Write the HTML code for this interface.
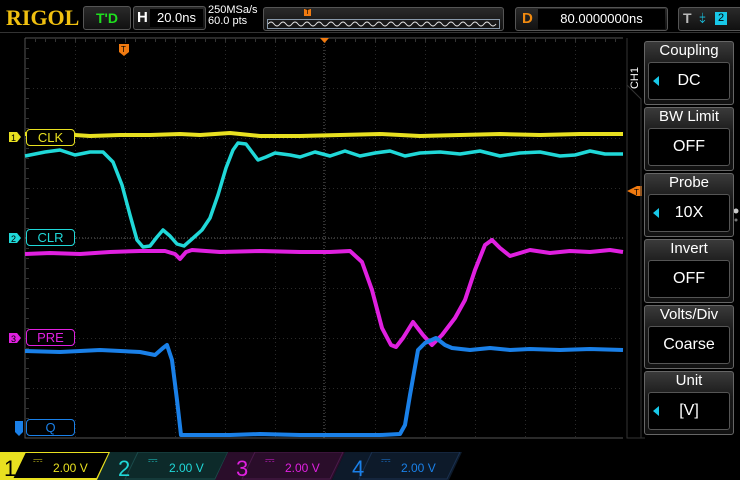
<!DOCTYPE html>
<html><head><style>
body{margin:0;background:#000;width:740px;height:480px;overflow:hidden;position:relative;font-family:"Liberation Sans",sans-serif;color:#fff}
.a{position:absolute}
.box{position:absolute;border:1px solid #555;border-radius:3px;background:linear-gradient(#2a2a2a,#111)}
.btn{position:absolute;left:644px;width:88px;height:62px;border:1px solid #666;border-radius:3px;background:linear-gradient(#3a3a3a,#1a1a1a 40%,#111)}
.btn .t{position:absolute;top:0;left:0;width:88px;text-align:center;font-size:15px;color:#fff}
.btn .v{position:absolute;left:3px;top:20px;width:80px;height:36px;border:1px solid #555;border-radius:3px;background:#000;text-align:center;line-height:36px;font-size:16px}
.arr{position:absolute;left:4px;top:13px;width:0;height:0;border-top:5px solid transparent;border-bottom:5px solid transparent;border-right:6px solid #18c8e8}
.lbl{position:absolute;left:26px;width:47px;height:15px;border:1.5px solid;border-radius:4px;text-align:center;font-size:13px;line-height:15px;background:#000}
</style></head><body>
<div class="a" style="left:6px;top:5px;font-family:'Liberation Serif',serif;font-weight:bold;font-size:22px;color:#f0c010">RIGOL</div>
<div class="box" style="left:83px;top:6px;width:46px;height:22px;text-align:center;line-height:22px;color:#1ee01e;font-weight:bold;font-size:14px">T'D</div>
<div class="box" style="left:133px;top:6px;width:71px;height:22px"><span class="a" style="left:3px;top:2px;font-weight:bold;font-size:15px">H</span><div class="a" style="left:16px;top:2px;width:53px;height:18px;background:#000;font-size:13px;line-height:18px;text-align:center">20.0ns</div></div>
<div class="a" style="left:208px;top:5px;font-size:11px;line-height:11px">250MSa/s<br>60.0 pts</div>
<div class="box" style="left:263px;top:7px;width:239px;height:22px"><div class="a" style="left:3px;top:11px;width:231px;height:8px;border:1px solid #89a"><svg width="231" height="8" class="a" style="left:0;top:0"><path d="M0 4 Q3 0 6 4 T12 4 T18 4 T24 4 T30 4 T36 4 T42 4 T48 4 T54 4 T60 4 T66 4 T72 4 T78 4 T84 4 T90 4 T96 4 T102 4 T108 4 T114 4 T120 4 T126 4 T132 4 T138 4 T144 4 T150 4 T156 4 T162 4 T168 4 T174 4 T180 4 T186 4 T192 4 T198 4 T204 4 T210 4 T216 4 T222 4 T228 4" stroke="#ddd" fill="none"/></svg></div><div class="a" style="left:40px;top:1px;width:7px;height:7px;background:#f07a10;font-size:7px;line-height:7px;text-align:center;color:#000">T</div></div>
<div class="box" style="left:515px;top:7px;width:151px;height:22px"><span class="a" style="left:6px;top:2px;color:#f08a10;font-weight:bold;font-size:15px">D</span><div class="a" style="left:22px;top:1px;width:127px;height:20px;background:#000;font-size:13px;line-height:20px;text-align:center">80.0000000ns</div></div>
<div class="box" style="left:678px;top:7px;width:70px;height:22px"><span class="a" style="left:4px;top:2px;color:#bbb;font-weight:bold;font-size:14px">T</span><span class="a" style="left:20px;top:1px;color:#18c8e8;font-size:14px">⤈</span><span class="a" style="left:36px;top:4px;width:12px;height:13px;background:#18c8e8;color:#000;font-size:11px;line-height:13px;text-align:center">2</span></div>
<div class="a" style="left:0;top:32px;width:740px;height:1px;background:#333"></div>

<svg class="a" style="left:0;top:0" width="740" height="480">
<defs><pattern id="g" x="25" y="38" width="50" height="50" patternUnits="userSpaceOnUse"><path d="M0 0V50M0 0H50" stroke="#555" stroke-dasharray="1 3" fill="none"/></pattern>
<pattern id="tx" x="25" y="38" width="10" height="10" patternUnits="userSpaceOnUse"><path d="M0 0V4" stroke="#666"/></pattern>
<pattern id="ty" x="25" y="38" width="10" height="10" patternUnits="userSpaceOnUse"><path d="M0 0H4" stroke="#666"/></pattern></defs>
<rect x="25" y="38" width="598" height="400" fill="url(#g)"/>
<rect x="25" y="39" width="598" height="4" fill="url(#tx)"/>
<rect x="25" y="433" width="598" height="4" fill="url(#tx)" transform="translate(0,0)"/>
<rect x="26" y="38" width="4" height="400" fill="url(#ty)"/>
<path d="M25 38V438H623" stroke="#555" fill="none"/>
<path d="M25 38H623" stroke="#555" fill="none"/>
<path d="M324 38V438M25 238H623" stroke="#666" stroke-dasharray="1 2" fill="none"/>
<polygon points="119,44 129,44 129,52 124,56 119,52" fill="#f07a10"/><text x="121" y="52" font-size="8" fill="#000">T</text>
<polygon points="320,38 329,38 324.5,43" fill="#f07a10"/>
<g stroke-linejoin="round">
<polyline fill="none" stroke="#e8e020" stroke-width="4" points="25,134 60,134 90,136 120,135 150,135 180,134 200,135 230,133 260,136 300,136 340,135 380,134 420,136 460,135 500,134 540,135 580,134 623,134"/>
<polyline fill="none" stroke="#20d8d8" stroke-width="3.5" points="25,156 45,152 60,150 75,155 90,152 103,152 113,162 122,185 130,215 137,240 143,247 150,246 157,237 163,230 170,236 177,244 184,246 192,239 202,230 210,218 218,195 226,168 233,150 238,143 246,144 252,152 258,160 266,157 275,153 290,155 300,157 315,152 330,156 345,151 360,156 375,153 390,151 405,156 420,153 440,152 460,154 480,151 500,156 520,153 540,152 560,156 575,155 590,151 605,154 623,154"/>
<polyline fill="none" stroke="#e020e0" stroke-width="4" points="25,254 50,253 80,254 110,252 140,251 165,251 175,254 180,259 186,252 192,250 220,252 260,251 300,252 330,252 350,251 362,262 372,290 382,328 391,345 396,347 403,338 413,322 423,335 432,345 442,335 455,318 465,300 475,270 485,245 492,240 500,248 510,256 520,253 530,250 550,253 570,251 590,252 610,250 623,252"/>
<polyline fill="none" stroke="#1a80e8" stroke-width="4" points="25,351 60,352 100,350 140,352 155,355 163,348 167,345 172,360 177,400 181,435 230,435 260,434 300,435 340,435 380,435 400,434 405,425 410,395 418,350 425,343 436,338 445,345 452,348 470,350 490,348 510,350 530,349 560,350 590,349 623,350"/>
</g>
<polygon points="9,132 17,132 21,137 17,142 9,142" fill="#e8e020"/><text x="11" y="141" font-size="9" fill="#000">1</text>
<polygon points="9,233 17,233 21,238 17,243 9,243" fill="#20d8d8"/><text x="11" y="242" font-size="9" fill="#000">2</text>
<polygon points="9,333 17,333 21,338 17,343 9,343" fill="#e020e0"/><text x="11" y="342" font-size="9" fill="#000">3</text>
<polygon points="15,421 23,421 23,432 19,436 15,432" fill="#1a80e8"/>
<polygon points="627,191 637,186 642,186 642,196 637,196" fill="#f07a10"/><text x="634" y="195" font-size="8" fill="#000">T</text>
<path d="M627 38V438H645M627 85L641 99V438" stroke="#333" fill="none"/>
<circle cx="736" cy="211" r="2.5" fill="#ccc"/><circle cx="736" cy="220" r="1.5" fill="#777"/>
</svg>
<div class="lbl" style="top:129px;border-color:#e8e020;color:#e8e020">CLK</div>
<div class="lbl" style="top:229px;border-color:#20d8d8;color:#20d8d8">CLR</div>
<div class="lbl" style="top:329px;border-color:#e020e0;color:#e020e0">PRE</div>
<div class="lbl" style="top:419px;border-color:#1a80e8;color:#1a80e8">Q</div>
<div class="a" style="left:624px;top:72px;transform:rotate(-90deg);font-size:11px">CH1</div>

<div class="btn" style="top:41px"><div class="t">Coupling</div><div class="v"><div class="arr"></div>DC</div></div>
<div class="btn" style="top:107px"><div class="t">BW Limit</div><div class="v">OFF</div></div>
<div class="btn" style="top:173px"><div class="t">Probe</div><div class="v"><div class="arr"></div>10X</div></div>
<div class="btn" style="top:239px"><div class="t">Invert</div><div class="v">OFF</div></div>
<div class="btn" style="top:305px"><div class="t">Volts/Div</div><div class="v">Coarse</div></div>
<div class="btn" style="top:371px"><div class="t">Unit</div><div class="v"><div class="arr"></div>[V]</div></div>

<svg class="a" style="left:0;top:452px" width="740" height="28">
<polygon points="0,0 25,0 12,28 0,28" fill="#e8e020"/>
<polygon points="25,0 110,0 97,27 12,27" fill="none" stroke="#e8e020" stroke-width="2"/>
<polygon points="110,0 230,0 217,28 97,28" fill="#0d2a2a"/><polygon points="138,0 228,0 215,27 125,27" fill="none" stroke="#1a4a4a"/>
<polygon points="228,0 345,0 332,28 215,28" fill="#2a0d2a"/><polygon points="255,0 343,0 330,27 242,27" fill="none" stroke="#4a1a4a"/>
<polygon points="345,0 462,0 449,28 332,28" fill="#0d1a2a"/><polygon points="372,0 460,0 447,27 359,27" fill="none" stroke="#1a3050"/>
<text x="4" y="24" font-size="22" fill="#000" font-family="Liberation Sans">1</text>
<text x="118" y="24" font-size="22" fill="#20d8d8" font-family="Liberation Sans">2</text>
<text x="236" y="24" font-size="22" fill="#e020e0" font-family="Liberation Sans">3</text>
<text x="352" y="24" font-size="22" fill="#1a80e8" font-family="Liberation Sans">4</text>
<g font-size="12" font-family="Liberation Sans">
<text x="33" y="12" fill="#e8e020">⎓</text><text x="53" y="20" fill="#e8e020">2.00 V</text>
<text x="148" y="12" fill="#20d8d8">⎓</text><text x="169" y="20" fill="#20d8d8">2.00 V</text>
<text x="265" y="12" fill="#e020e0">⎓</text><text x="285" y="20" fill="#e020e0">2.00 V</text>
<text x="381" y="12" fill="#1a80e8">⎓</text><text x="401" y="20" fill="#1a80e8">2.00 V</text>
</g>
</svg>
</body></html>
